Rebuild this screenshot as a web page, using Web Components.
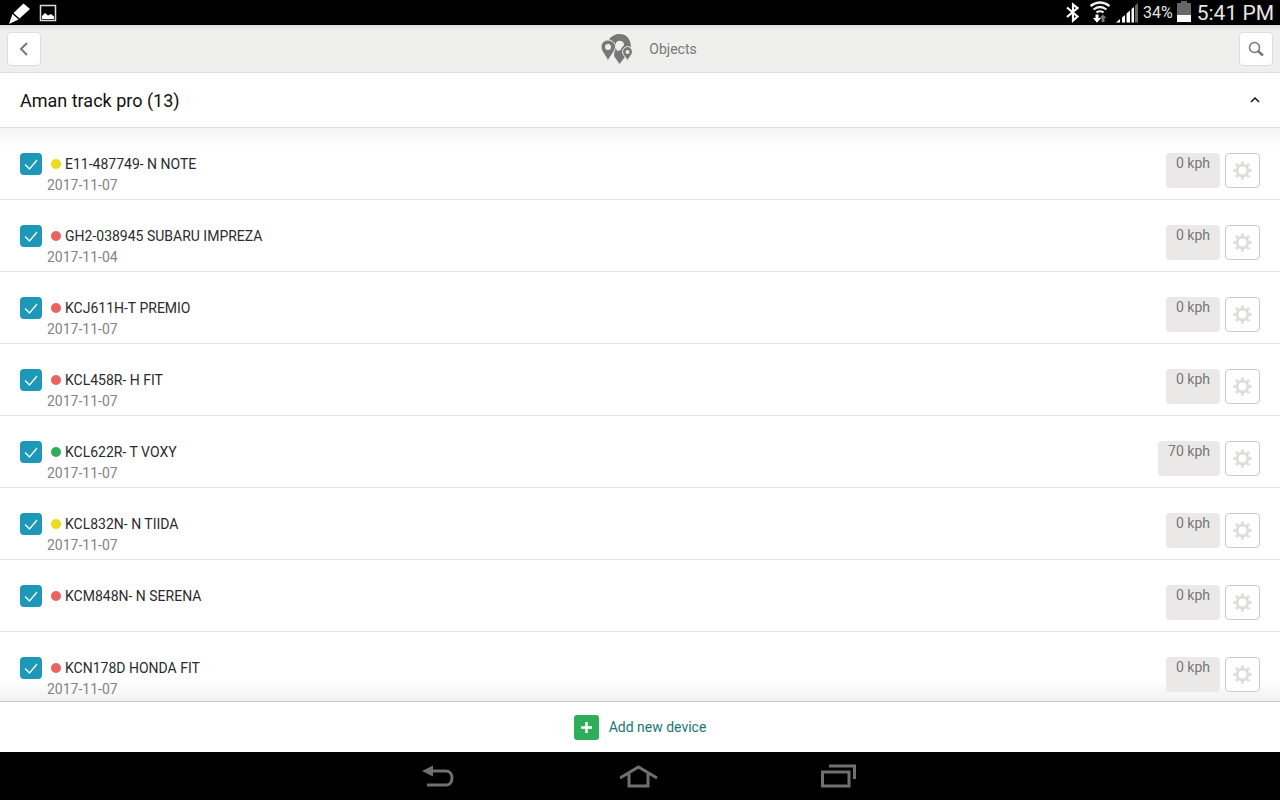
<!DOCTYPE html>
<html lang="en">
<head>
<meta charset="utf-8">
<meta name="viewport" content="width=device-width, initial-scale=1">
<title>Objects</title>
<style>
    body {
        margin: 0;
        font-family: Roboto, sans-serif;
        font-size: 14px;
        color: #2b2b2b;
        background: #fff;
    }
</style>
</head>
<body>
<track-app>
    <status-bar slot="status" battery="34%" time="5:41 PM"></status-bar>
    <title-bar slot="header">Objects</title-bar>
    <device-group label="Aman track pro (13)">
        <device-row state="idle" date="2017-11-07" speed="0 kph">E11-487749- N NOTE</device-row>
        <device-row state="off" date="2017-11-04" speed="0 kph">GH2-038945 SUBARU IMPREZA</device-row>
        <device-row state="off" date="2017-11-07" speed="0 kph">KCJ611H-T PREMIO</device-row>
        <device-row state="off" date="2017-11-07" speed="0 kph">KCL458R- H FIT</device-row>
        <device-row state="moving" date="2017-11-07" speed="70 kph">KCL622R- T VOXY</device-row>
        <device-row state="idle" date="2017-11-07" speed="0 kph">KCL832N- N TIIDA</device-row>
        <device-row state="off" speed="0 kph">KCM848N- N SERENA</device-row>
        <device-row state="off" date="2017-11-07" speed="0 kph">KCN178D HONDA FIT</device-row>
    </device-group>
    <add-bar slot="footer">Add new device</add-bar>
    <nav-bar slot="nav"></nav-bar>
</track-app>

<script>
// Base class: every element only has to give its markup
class TrackElement extends HTMLElement {
    constructor() {
        super();
        this.attachShadow({ mode: "open" });
    }

    connectedCallback() {
        this.shadowRoot.innerHTML = this.template();
    }

    attr(name) {
        return this.getAttribute(name) || "";
    }
}

class TrackApp extends TrackElement {
    template() {
        return `
        <style>
          :host {
            display: flex;
            flex-direction: column;
            height: 100vh;
          }

          main {
            display: flex;
            flex-direction: column;
            flex: 1;
            min-height: 0;
          }
        </style>
        <slot name="status"></slot>
        <slot name="header"></slot>
        <main><slot></slot></main>
        <slot name="footer"></slot>
        <slot name="nav"></slot>
      `;
    }
}

class StatusBar extends TrackElement {
    template() {
        return `
        <style>
          :host {
            display: flex;
            align-items: center;
            justify-content: space-between;
            height: 25px;
            padding: 0 6px 0 8px;
            background: #000;
            color: #e6e6e6;
          }

          div {
            display: flex;
            align-items: center;
          }

          .notes {
            gap: 8px;
          }

          .system {
            gap: 4px;
          }

          .battery {
            font-size: 16px;
          }

          .time {
            font-size: 21px;
            line-height: 24px;
            padding-left: 2px;
          }

          svg {
            display: block;
          }
        </style>
        <div class="notes">
          <svg width="23" height="25" viewBox="0 0 23 25" fill="#fff">
            <path d="M15.5 3.5L22 9L11.5 18.5L5.5 13Z"/>
            <path d="M4.5 14L10.5 19.5L1 24Z"/>
          </svg>
          <svg width="18" height="25" viewBox="0 0 18 25">
            <rect x="1.5" y="5.5" width="15" height="15" fill="none" stroke="#ddd" stroke-width="1.5"/>
            <path d="M3 19V16L6 13L9 15.5L12 14L15 16.5V19Z" fill="#fff"/>
          </svg>
        </div>
        <div class="system">
          <svg width="20" height="25" viewBox="0 0 20 25" fill="none" stroke="#fff" stroke-width="2.2">
            <path d="M2 7.5L12.5 16.5L8 20.5V4.5L12.5 8L2 17"/>
          </svg>
          <svg width="22" height="25" viewBox="0 0 22 25" fill="none" stroke="#eee" stroke-width="2.2">
            <path d="M1.500 6Q11 -1 20.500 6M4.500 9.500Q11 4.500 17.500 9.500M7.500 12.500Q11 10 14.500 12.500"/>
            <path d="M8 15V19M4.500 18H11.500L8 22.500Z" fill="#fff" stroke-width="0"/>
            <path d="M6.500 14.500H9.500V18H12L8 22.500L4 18H6.500Z" fill="#fff" stroke="none"/>
            <path d="M12.500 22V18H10.500L14 14.500L17.500 18H15.500V22Z" fill="#777" stroke="none"/>
          </svg>
          <svg width="24" height="25" viewBox="0 0 24 25" fill="#fff">
            <path d="M1 22.500L5 19V22.500ZM7 17.500L10 15V22.500H7ZM11.500 13.500L15 10.500V22.500H11.500ZM16.500 9L19 7V22.500H16.500Z"/>
            <path d="M20 5.500L23 3V22.500H20Z" fill="#666"/>
          </svg>
          <span class="battery">${this.attr("battery")}</span>
          <svg width="14" height="25" viewBox="0 0 14 25">
            <path d="M4 1H10V3H14V16H0V3H4Z" fill="#666"/>
            <path d="M0 15H14V22H0Z" fill="#fff"/>
          </svg>
          <span class="time">${this.attr("time")}</span>
        </div>
      `;
    }
}

class TitleBar extends TrackElement {
    template() {
        return `
        <style>
          :host {
            display: grid;
            grid-template-columns: 34px 1fr 34px;
            align-items: center;
            box-sizing: border-box;
            height: 48px;
            padding: 0 7px;
            background: linear-gradient(#dedede, #efefed 5px);
            border-bottom: 1px solid #dcdcdc;
            color: #777;
          }

          h1 {
            display: flex;
            align-items: center;
            justify-content: center;
            gap: 16px;
            margin: 0;
            padding-left: 18px;
            font-size: 14px;
            font-weight: 400;
          }

          button {
            display: grid;
            place-items: center;
            box-sizing: border-box;
            width: 34px;
            height: 34px;
            padding: 0;
            border: 1px solid #dcdcdc;
            border-radius: 4px;
            background: #fff;
          }
        </style>
        <button type="button" aria-label="Back">
          <svg width="14" height="16" viewBox="0 0 14 16" fill="none" stroke="#777" stroke-width="2">
            <path d="M10 2L4 8L10 14"/>
          </svg>
        </button>
        <h1>
          <svg width="32" height="30" viewBox="0 0 32 30" fill="#777">
            <path d="M8 5C11 2 14 0 18.5 0C24 0 28 3 29.5 9L30 13L22 18L24 23L18.5 30L13 22L14 12Z"/>
            <path d="M15 9C16 6 22 6 23 10C23 13 20 13 20 16L16 17L14 12Z" fill="#efefed"/>
            <path d="M7 6C11 6 14.500 9 14.500 13C14.500 17 9 22 7 27C5 22 0 17 0 13C0 9 3 6 7 6Z" stroke="#efefed"/>
            <circle cx="7" cy="13" r="3" fill="#efefed"/>
            <path d="M26.5 12.5C29 12.5 31.5 15 31.5 18C31.5 21 28 23 26.5 27C25 23 21.5 21 21.5 18C21.5 15 24 12.5 26.5 12.5Z" stroke="#efefed"/>
            <circle cx="26.5" cy="18" r="2" fill="#efefed"/>
          </svg>
          <slot></slot>
        </h1>
        <button type="button" aria-label="Search">
          <svg width="16" height="16" viewBox="0 0 16 16" fill="none" stroke="#777">
            <circle cx="6.5" cy="6.5" r="5" stroke-width="1.5"/>
            <path d="M10 10L15 14.500" stroke-width="2.5"/>
          </svg>
        </button>
      `;
    }
}

class DeviceGroup extends TrackElement {
    connectedCallback() {
        super.connectedCallback();

        let toggle = this.shadowRoot.querySelector("button");
        let list = this.shadowRoot.querySelector(".list");

        toggle.addEventListener("click", () => {
            list.hidden = !list.hidden;
            toggle.setAttribute("aria-expanded", !list.hidden);
        });
    }

    template() {
        return `
        <style>
          :host {
            display: flex;
            flex-direction: column;
            flex: 1;
            min-height: 0;
          }

          button {
            display: flex;
            align-items: center;
            justify-content: space-between;
            flex: none;
            height: 55px;
            padding: 0 20px;
            border: 0;
            border-bottom: 1px solid #dcdcdc;
            background: #fff;
            color: #111;
            font: inherit;
            font-size: 18px;
          }

          button[aria-expanded="false"] svg {
            rotate: 180deg;
          }

          .list {
            flex: 1;
            overflow-y: auto;
            scrollbar-width: none;
            background:
              linear-gradient(#f3f3f3, #fff) top / 100% 20px no-repeat,
              linear-gradient(#fff, #f1f1f1) bottom / 100% 20px no-repeat;
          }
        </style>
        <button type="button" aria-expanded="true">
          ${this.attr("label")}
          <svg width="10" height="8" viewBox="0 0 10 8" fill="none" stroke="#111" stroke-width="1.5">
            <path d="M1 6L5 2L9 6"/>
          </svg>
        </button>
        <div class="list" role="list"><slot></slot></div>
      `;
    }
}

class DeviceRow extends TrackElement {
    connectedCallback() {
        this.setAttribute("role", "listitem");
        super.connectedCallback();
    }

    template() {
        return `
        <style>
          :host {
            display: flex;
            align-items: flex-start;
            box-sizing: border-box;
            height: 72px;
            padding: 25px 20px 0;
            border-bottom: 1px solid #e2e2e2;
            --dot: #e96363;
          }

          :host([state="idle"]) {
            --dot: #eedc18;
          }

          :host([state="moving"]) {
            --dot: #2eae5b;
          }

          .check {
            display: grid;
          }

          .check > * {
            grid-area: 1 / 1;
            width: 22px;
            height: 22px;
          }

          .check svg {
            pointer-events: none;
          }

          input {
            appearance: none;
            margin: 0;
            border-radius: 4px;
            background: #ccc;
          }

          input:checked {
            background: #1e98b8;
          }

          input:not(:checked) + svg {
            visibility: hidden;
          }

          .info {
            flex: 1;
            padding-left: 5px;
            line-height: 22px;
          }

          label {
            display: flex;
            align-items: center;
            gap: 4px;
            padding-left: 4px;
            height: 21px;
            line-height: 20px;
          }

          label::before {
            content: "";
            width: 10px;
            height: 10px;
            border-radius: 50%;
            background: var(--dot);
          }

          .date {
            color: #828282;
          }

          .speed,
          button {
            box-sizing: border-box;
            height: 35px;
            border-radius: 4px;
          }

          .speed {
            padding: 0 10px;
            margin-right: 5px;
            background: #eae9e8;
            color: #777;
            line-height: 21px;
          }

          button {
            display: grid;
            place-items: center;
            width: 35px;
            padding: 0;
            border: 1px solid #ccc;
            background: #fff;
          }
        </style>
        <div class="check">
          <input id="show" type="checkbox" checked>
          <svg viewBox="0 0 22 22" fill="none" stroke="#fff" stroke-width="1.3">
            <path d="M5 11.5L9.5 16L17 7"/>
          </svg>
        </div>
        <div class="info">
          <label for="show"><slot></slot></label>
          <div class="date">${this.attr("date")}</div>
        </div>
        <div class="speed">${this.attr("speed")}</div>
        <button type="button" aria-label="Settings">
          <svg width="19" height="19" viewBox="0 0 20 20" fill="none" stroke="#dedddb">
            <circle cx="10" cy="10" r="5.5" stroke-width="2.8"/>
            ${Array.from(
                { length: 8 },
                (_, i) => `<path d="M8 4L9 0H11L12 4Z" fill="#dedddb" stroke="none" transform="rotate(${i * 45} 10 10)"/>`
            ).join("")}
          </svg>
        </button>
      `;
    }
}

class AddBar extends TrackElement {
    template() {
        return `
        <style>
          :host {
            display: flex;
            justify-content: center;
            box-sizing: border-box;
            height: 51px;
            border-top: 1px solid #c4c4c4;
            background: #fff;
          }

          button {
            display: flex;
            align-items: center;
            gap: 10px;
            padding: 0;
            border: 0;
            background: none;
            color: #17786f;
            font: inherit;
          }
        </style>
        <button type="button">
          <svg width="25" height="25" viewBox="0 0 25 25">
            <rect width="25" height="25" rx="3" fill="#2eae5b"/>
            <path d="M12.5 7V18M7 12.5H18" stroke="#fff" stroke-width="2.5"/>
          </svg>
          <slot></slot>
        </button>
      `;
    }
}

class NavBar extends TrackElement {
    template() {
        return `
        <style>
          :host {
            display: block;
            background: #000;
          }

          nav {
            display: flex;
            align-items: center;
            justify-content: center;
            gap: 160px;
            height: 48px;
          }

          button {
            display: block;
            padding: 0;
            border: 0;
            background: none;
          }

          svg {
            display: block;
            fill: none;
            stroke: #707070;
            stroke-width: 3;
          }
        </style>
        <nav>
          <button type="button" aria-label="Back">
            <svg width="40" height="28" viewBox="0 0 40 28">
              <path d="M12 9H26C34 9 34 23 26 23H7"/>
              <path d="M2 9L13 3.5V14.500Z" fill="#707070" stroke="none"/>
            </svg>
          </button>
          <button type="button" aria-label="Home">
            <svg width="40" height="28" viewBox="0 0 40 28">
              <path d="M0 16L18.500 5L37 16M9 12V24H28V12"/>
            </svg>
          </button>
          <button type="button" aria-label="Recent apps">
            <svg width="40" height="28" viewBox="0 0 40 28">
              <path d="M2.500 10H29V24H2.500ZM9 4H34.500V17"/>
            </svg>
          </button>
        </nav>
      `;
    }
}

customElements.define("track-app", TrackApp);
customElements.define("status-bar", StatusBar);
customElements.define("title-bar", TitleBar);
customElements.define("device-group", DeviceGroup);
customElements.define("device-row", DeviceRow);
customElements.define("add-bar", AddBar);
customElements.define("nav-bar", NavBar);
</script>
</body>
</html>
